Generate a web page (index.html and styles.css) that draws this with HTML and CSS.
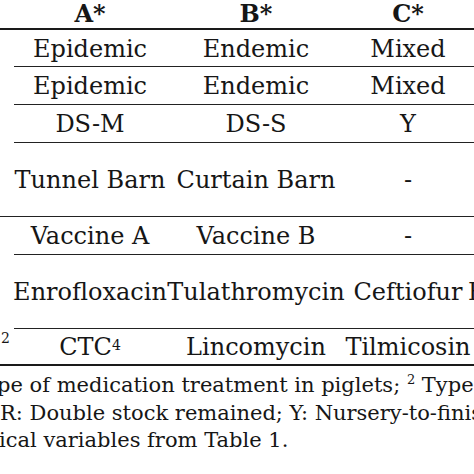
FILE: index.html
```html
<!DOCTYPE html>
<html lang="en">
<head>
<meta charset="utf-8">
<title>Table</title>
<link rel="stylesheet" href="styles.css">
</head>
<body>
<div class="page">
  <div class="table">
    <div class="row head">
      <div class="cell lab"></div>
      <div class="cell">A*</div>
      <div class="cell">B*</div>
      <div class="cell">C*</div>
      <div class="cell more"></div>
    </div>
    <div class="row">
      <div class="cell lab"></div>
      <div class="cell">Epidemic</div>
      <div class="cell">Endemic</div>
      <div class="cell">Mixed</div>
      <div class="cell more"></div>
    </div>
    <div class="row r38">
      <div class="cell lab"></div>
      <div class="cell">Epidemic</div>
      <div class="cell">Endemic</div>
      <div class="cell">Mixed</div>
      <div class="cell more"></div>
    </div>
    <div class="row r38">
      <div class="cell lab"></div>
      <div class="cell">DS-M</div>
      <div class="cell">DS-S</div>
      <div class="cell">Y</div>
      <div class="cell more"></div>
    </div>
    <div class="row tall full">
      <div class="cell lab"></div>
      <div class="cell">Tunnel Barn</div>
      <div class="cell">Curtain Barn</div>
      <div class="cell">-</div>
      <div class="cell more"></div>
    </div>
    <div class="row r38">
      <div class="cell lab"></div>
      <div class="cell">Vaccine A</div>
      <div class="cell">Vaccine B</div>
      <div class="cell">-</div>
      <div class="cell more"></div>
    </div>
    <div class="row tall">
      <div class="cell lab"></div>
      <div class="cell">Enrofloxacin</div>
      <div class="cell">Tulathromycin</div>
      <div class="cell">Ceftiofur</div>
      <div class="cell more">Florfenicol</div>
    </div>
    <div class="row last">
      <div class="cell lab"><sup class="labsup">2</sup></div>
      <div class="cell">CTC<sup class="sup">4</sup></div>
      <div class="cell">Lincomycin</div>
      <div class="cell">Tilmicosin</div>
      <div class="cell more"></div>
    </div>
  </div>
  <div class="notes">
    <p class="note n1">pe of medication treatment in piglets; <sup class="nsup">2</sup> Type of production system; <sup class="nsup">3</sup> Type</p>
    <p class="note n2">R: Double stock remained; Y: Nursery-to-finish farm; DS-M: Double stock</p>
    <p class="note n3">ical variables from Table 1.</p>
  </div>
</div>
</body>
</html>
```

FILE: styles.css
```css
html, body {
  margin: 0;
  padding: 0;
  background: #ffffff;
}

.page {
  width: 474px;
  height: 474px;
  overflow: hidden;
  font-family: "DejaVu Serif", "Liberation Serif", serif;
  color: #161616;
  background: #ffffff;
}

.table {
  display: flex;
  flex-direction: column;
}

.row {
  display: grid;
  grid-template-columns: 14px 152px 180px 124px 1fr;
  height: 37px;
}

.row.r38 {
  height: 38px;
}

.row.tall {
  height: 74px;
}

.row.head {
  height: 30px;
}

.cell {
  box-sizing: border-box;
  display: flex;
  align-items: center;
  justify-content: center;
  white-space: nowrap;
  font-size: 24px;
  line-height: 28px;
  padding-top: 1px;
  border-bottom: 1.5px solid #222;
}

.cell.lab {
  border-bottom: none;
  justify-content: flex-end;
  align-items: flex-start;
  padding-right: 4px;
}

.cell.more {
  justify-content: flex-start;
  margin-left: -2px;
}

.head .cell {
  font-weight: bold;
  line-height: 28px;
  align-items: flex-start;
  padding-top: 0;
  border-bottom: 2px solid #1a1a1a;
}

.head .cell.lab {
  border-bottom: 2px solid #1a1a1a;
}

.full .cell.lab {
  border-bottom: 1.5px solid #222;
}

.last .cell,
.last .cell.lab {
  border-bottom: 2px solid #1a1a1a;
}

.sup {
  font-size: 14px;
  line-height: 0;
  position: relative;
  top: -2px;
  vertical-align: super;
}

.labsup {
  font-size: 14px;
  line-height: 14px;
  margin-top: 1px;
}

.notes {
  padding-top: 6px;
}

.note {
  margin: 0;
  height: 27.5px;
  font-size: 21px;
  line-height: 27.5px;
  white-space: nowrap;
}

.n1 {
  margin-left: -3px;
}

.n3 {
  margin-left: -1px;
}

.nsup {
  font-size: 13px;
  line-height: 0;
  vertical-align: super;
}
```
